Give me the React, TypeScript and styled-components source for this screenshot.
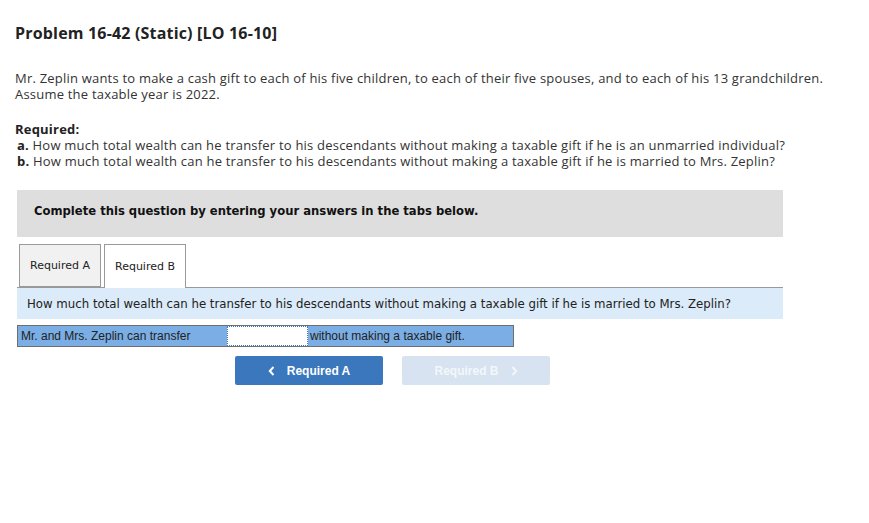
import React from 'react';
import styled, { createGlobalStyle } from 'styled-components';

const GlobalStyle = createGlobalStyle`
  body {
    margin: 0;
    background: #fff;
    font-family: 'Open Sans', Lato, sans-serif;
    color: #333;
  }
`;

const Page = styled.div`
  padding: 22px 40px 0 15px;
`;

const Title = styled.h1`
  margin: 0;
  font-size: 16px;
  line-height: 22px;
  font-weight: 700;
  letter-spacing: 0.18px;
  color: #222;
`;

const Para = styled.p`
  margin: 26px 0 0;
  font-size: 13px;
  line-height: 16px;
  letter-spacing: 0.21px;
`;

const Required = styled.div`
  margin-top: 19px;
  font-size: 13px;
  line-height: 16px;
  letter-spacing: 0.21px;
`;

const ReqHead = styled.div`
  font-weight: 700;
  color: #222;
`;

const ReqItem = styled.div`
  padding-left: 2px;
  & b {
    color: #222;
  }
`;

const Notice = styled.div`
  margin: 21px 46px 0 2px;
  height: 47px;
  background: #dedede;
  display: flex;
  align-items: center;
  padding: 0 0 6px 17px;
  box-sizing: border-box;
  font-family: 'DejaVu Sans', Verdana, sans-serif;
  font-size: 11.6px;
  font-weight: 700;
  color: #111;
`;

const Tabs = styled.div`
  margin: 7px 0 0 2px;
  display: flex;
  align-items: flex-end;
  gap: 3px;
  padding-left: 2px;
`;

const Tab = styled.div<{ $active?: boolean }>`
  padding: 0 10px;
  display: flex;
  align-items: center;
  border: 1px solid #9a9a9a;
  border-bottom: ${(p) => (p.$active ? 'none' : '1px solid #9a9a9a')};
  background: ${(p) => (p.$active ? '#fff' : '#f1f1f1')};
  font-family: 'DejaVu Sans', Verdana, sans-serif;
  font-size: 11px;
  color: #222;
  box-sizing: border-box;
  position: relative;
  z-index: 1;
  margin-bottom: ${(p) => (p.$active ? -1 : 0)}px;
  height: ${(p) => (p.$active ? 44 : 43)}px;
`;

const QuestionBar = styled.div`
  margin: 0 46px 0 2px;
  border-top: 1px solid #999;
  background: #dbebf9;
  height: 32px;
  box-sizing: border-box;
  display: flex;
  align-items: center;
  padding-left: 10px;
  font-family: 'DejaVu Sans', Verdana, sans-serif;
  font-size: 11.75px;
  color: #222;
`;

const AnswerRow = styled.div`
  margin: 6px 0 0 2px;
  width: 497px;
  height: 22px;
  box-sizing: border-box;
  border: 1px solid #6f6f6f;
  background: #7aaee5;
  display: flex;
  align-items: center;
  font-family: 'Liberation Sans', Arial, sans-serif;
  font-size: 12px;
  color: #222;
`;

const Label = styled.span`
  width: 209px;
  padding-left: 3px;
  box-sizing: border-box;
`;

const AmountInput = styled.input`
  width: 81px;
  height: 20px;
  box-sizing: border-box;
  border: 1px dotted #3b78c9;
  background: #fff;
  margin: 0;
  padding: 0;
  outline: none;
`;

const After = styled.span`
  padding-left: 2px;
`;

const Nav = styled.div`
  margin: 9px 0 0 220px;
  display: flex;
  gap: 19px;
`;

const NavButton = styled.button<{ $disabled?: boolean }>`
  width: 148px;
  height: 29px;
  border: none;
  border-radius: 2px;
  background: ${(p) => (p.$disabled ? '#d7e3f0' : '#3b77bc')};
  color: ${(p) => (p.$disabled ? '#f3f7fb' : '#fff')};
  font-family: 'Liberation Sans', Arial, sans-serif;
  font-size: 12px;
  font-weight: 700;
  display: flex;
  align-items: center;
  justify-content: center;
  gap: 12px;
  padding: 0;
  cursor: ${(p) => (p.$disabled ? 'default' : 'pointer')};
`;

const Chevron = ({ dir }: { dir: 'left' | 'right' }) => (
  <svg width="7" height="10" viewBox="0 0 7 10">
    <path
      d={dir === 'left' ? 'M5.5 1 L1.8 5 L5.5 9' : 'M1.5 1 L5.2 5 L1.5 9'}
      fill="none"
      stroke="currentColor"
      strokeWidth="2"
    />
  </svg>
);

export default function App() {
  return (
    <>
      <GlobalStyle />
      <Page>
        <Title>Problem 16-42 (Static) [LO 16-10]</Title>
        <Para>
          Mr. Zeplin wants to make a cash gift to each of his five children, to each of their five spouses, and to each of
          his 13 grandchildren.
          <br />
          Assume the taxable year is 2022.
        </Para>
        <Required>
          <ReqHead>Required:</ReqHead>
          <ReqItem>
            <b>a.</b> How much total wealth can he transfer to his descendants without making a taxable gift if he is an
            unmarried individual?
          </ReqItem>
          <ReqItem>
            <b>b.</b> How much total wealth can he transfer to his descendants without making a taxable gift if he is
            married to Mrs. Zeplin?
          </ReqItem>
        </Required>
        <Notice>Complete this question by entering your answers in the tabs below.</Notice>
        <Tabs>
          <Tab>Required A</Tab>
          <Tab $active>Required B</Tab>
        </Tabs>
        <QuestionBar>
          How much total wealth can he transfer to his descendants without making a taxable gift if he is married to
          Mrs. Zeplin?
        </QuestionBar>
        <AnswerRow>
          <Label>Mr. and Mrs. Zeplin can transfer</Label>
          <AmountInput type="text" />
          <After>without making a taxable gift.</After>
        </AnswerRow>
        <Nav>
          <NavButton>
            <Chevron dir="left" />
            Required A
          </NavButton>
          <NavButton $disabled>
            Required B
            <Chevron dir="right" />
          </NavButton>
        </Nav>
      </Page>
    </>
  );
}
